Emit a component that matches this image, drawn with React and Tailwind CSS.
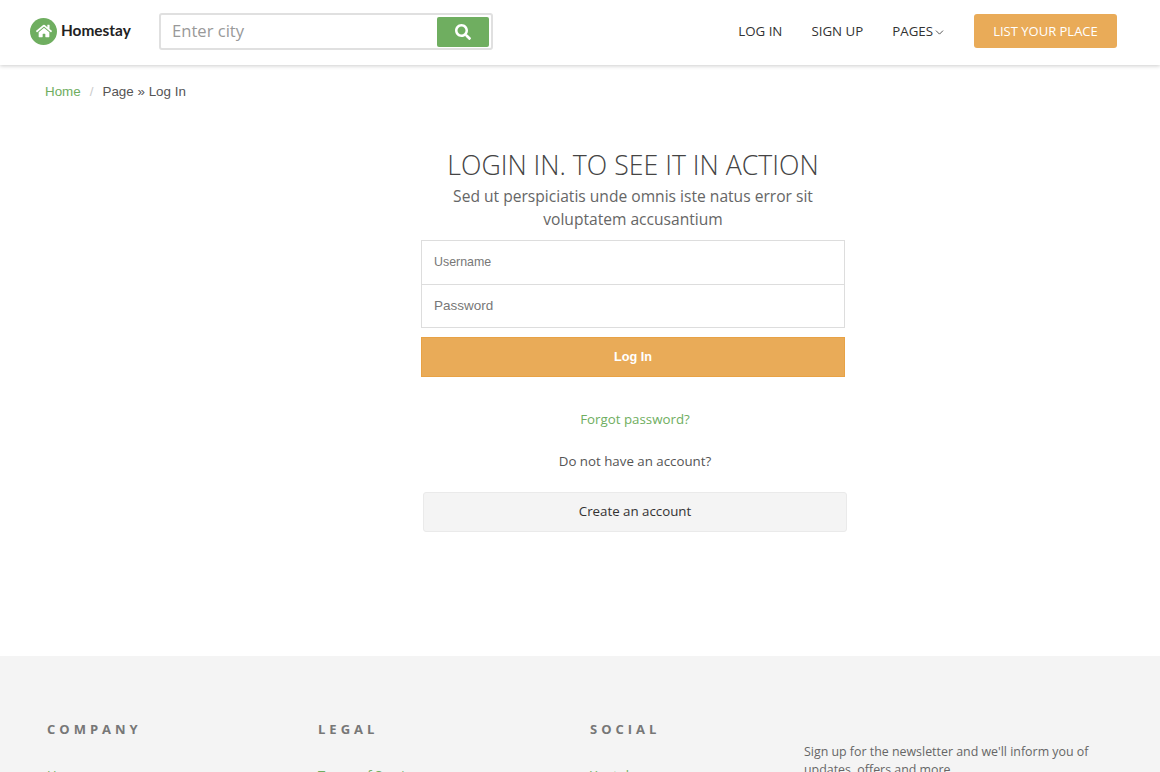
import { ChevronDown } from "lucide-react";
import { FaHome, FaSearch } from "react-icons/fa";

const openSans = "font-['Open_Sans',sans-serif]";
const arial = "font-['Liberation_Sans',Arial,sans-serif]";

const footerColumns = [
  { title: "COMPANY", link: "Home", className: "w-[271px]" },
  { title: "LEGAL", link: "Terms of Service", className: "w-[272px]" },
  { title: "SOCIAL", link: "Youtube", className: "w-[214px]" },
];

function Header() {
  return (
    <header className="relative z-10 flex h-[65px] items-center bg-white pb-[3px] pl-[30px] pr-[43px] shadow-[0_1px_4px_rgba(0,0,0,0.2)]">
      <a className="flex w-[101px] items-center gap-[4px]">
        <span className="flex h-[27px] w-[27px] shrink-0 items-center justify-center rounded-full bg-[#6fae60]">
          <FaHome className="h-[16px] w-[16px] text-white" />
        </span>
        <span className="font-['Lato',sans-serif] text-[15.4px] font-bold text-[#222]">Homestay</span>
      </a>

      <div className="ml-[28px] mt-[1px] flex h-[37px] w-[334px] items-center rounded-[3px] border-2 border-[#e0e0e0] pl-[11px] pr-[2px]">
        <span className={`${openSans} flex-1 text-[16.6px] text-[#999]`}>Enter city</span>
        <button className="flex h-[30px] w-[52px] items-center justify-center rounded-[2px] bg-[#6fae60]">
          <FaSearch className="h-[16px] w-[16px] text-white" />
        </button>
      </div>

      <nav className={`${openSans} ml-auto flex items-center text-[13.3px] text-[#333]`}>
        <a className="pt-[2px]">LOG IN</a>
        <a className="ml-[29px] pt-[2px]">SIGN UP</a>
        <a className="ml-[29px] flex items-center pt-[2px]">
          PAGES
          <ChevronDown className="h-[13px] w-[13px]" strokeWidth={1.5} />
        </a>
        <a className="ml-[28px] flex h-[34px] w-[143px] items-center justify-center rounded-[3px] bg-[#e9ab58] pt-[2px] text-[13px] text-white">
          LIST YOUR PLACE
        </a>
      </nav>
    </header>
  );
}

function Breadcrumb() {
  return (
    <div className={`${arial} flex h-[52px] items-center pl-[45px] pt-[2px] text-[13.4px] text-[#555]`}>
      <a className="text-[#6fae60]">Home</a>
      <span className="mx-[9px] text-[#ccc]">/</span>
      <span>Page » Log In</span>
    </div>
  );
}

function LoginForm() {
  return (
    <main className="h-[539px] pl-[421px] pt-[30px]">
      <div className="flex w-[424px] flex-col items-center">
        <h1 className={`${openSans} whitespace-nowrap text-[26.7px] font-light leading-[36px] text-[#444]`}>
          LOGIN IN. TO SEE IT IN ACTION
        </h1>
        <p className={`${openSans} mt-[2px] w-[380px] text-center text-[15.6px] leading-[23px] text-[#666]`}>
          Sed ut perspiciatis unde omnis iste natus error sit voluptatem accusantium
        </p>

        <div className={`${arial} mt-[9px] w-full border border-[#ddd] text-[#777]`}>
          <div className="flex h-[43px] items-center px-[12px] text-[12.4px]">Username</div>
          <div className="flex h-[43px] items-center border-t border-[#ddd] px-[12px] text-[13.5px]">Password</div>
        </div>

        <button className={`${arial} mt-[9px] flex h-[40px] w-full items-center justify-center border border-[#e8a245] bg-[#e9ab58] pt-[2px] text-[12.7px] font-bold text-white`}>
          Log In
        </button>

        <a className={`${openSans} ml-[4px] mt-[32px] text-[13.3px] leading-[20px] text-[#6fae60]`}>Forgot password?</a>
        <p className={`${openSans} ml-[4px] mt-[22px] text-[13.3px] leading-[20px] text-[#555]`}>Do not have an account?</p>

        <button className={`${openSans} ml-[4px] mt-[21px] flex h-[40px] w-full items-center justify-center rounded-[3px] border border-[#eaeaea] bg-[#f4f4f4] text-[13.3px] text-[#333]`}>
          Create an account
        </button>
      </div>
    </main>
  );
}

function Footer() {
  return (
    <footer className={`${openSans} flex h-[116px] overflow-hidden bg-[#f4f4f4] pl-[47px] pt-[64px]`}>
      {footerColumns.map((col) => (
        <div key={col.title} className={col.className}>
          <h4 className="text-[13px] font-bold leading-[18px] tracking-[4px] text-[#777]">{col.title}</h4>
          <a className="mt-[28px] block text-[13px] leading-[18px] text-[#6fae60]">{col.link}</a>
        </div>
      ))}
      <p className="mt-[23px] w-[300px] text-[12.4px] leading-[18px] text-[#666]">
        Sign up for the newsletter and we'll inform you of updates, offers and more.
      </p>
    </footer>
  );
}

export default function App() {
  return (
    <div className="h-[772px] overflow-hidden bg-white">
      <Header />
      <Breadcrumb />
      <LoginForm />
      <Footer />
    </div>
  );
}
